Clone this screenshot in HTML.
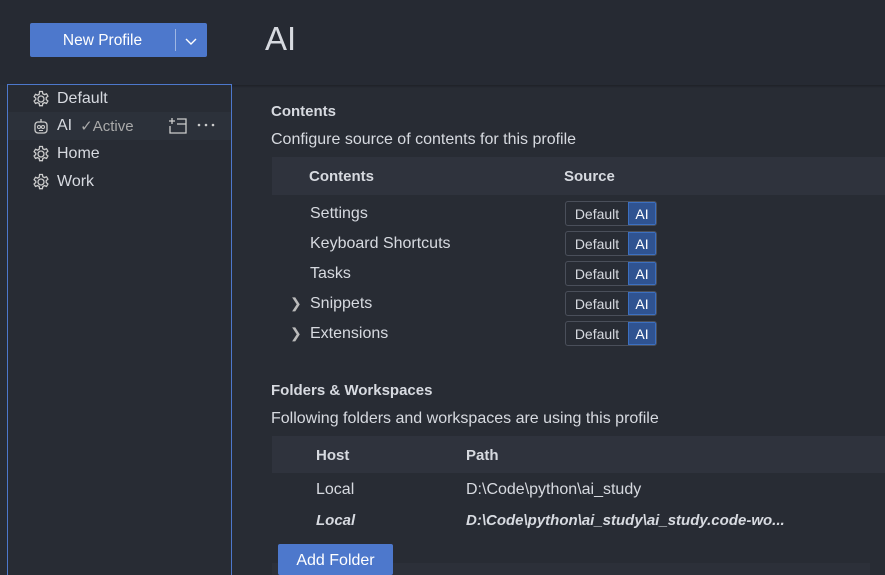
<!DOCTYPE html>
<html><head><meta charset="utf-8"><style>
*{margin:0;padding:0;box-sizing:border-box}
html,body{width:885px;height:575px;overflow:hidden}
body{background:#282c34;font-family:"Segoe UI","Liberation Sans",sans-serif;color:#d7dae0;font-size:16px;position:relative}
.a{position:absolute}
.btn{background:#4d78cc;color:#fff;border-radius:2px}
.row{position:absolute;left:0;height:28px;display:flex;align-items:center;font-size:16px}
.gear{width:18px;height:18px;margin-right:7px}
.seg{position:absolute;left:565px;width:92px;height:25px;border:1px solid #4a4f5a;border-radius:3px;display:flex;font-size:14px;overflow:hidden}
.seg span{display:flex;align-items:center;justify-content:center}
.seg .d{width:62px;color:#d7dae0}
.seg .s{flex:1;background:#2f5391;color:#fff;border:1px solid #3b6fc0}
.lbl{position:absolute;left:310px;font-size:16px;color:#d7dae0}
.chev{position:absolute;left:290px;font-size:14px;color:#bbb}
</style></head><body>
<div class="a" style="left:0;top:0;width:885px;height:85px;background:#262a33"></div>
<div class="a" style="left:232px;top:85px;width:653px;height:3px;background:linear-gradient(#1e2127,#282c34)"></div>
<div class="a btn" style="left:30px;top:23px;width:177px;height:34px;"></div>
<div class="a" style="left:30px;top:32px;width:145px;text-align:center;color:#fff;font-size:15.5px">New Profile</div>
<div class="a" style="left:175px;top:29px;width:1px;height:22px;background:#9fb6e3"></div>
<svg class="a" style="left:183px;top:33px" width="16" height="16" viewBox="0 0 16 16"><path d="M3 6l5 5 5-5" stroke="#fff" stroke-width="1.4" fill="none"/></svg>
<div class="a" style="left:265px;top:20px;font-size:33px;color:#d7dae0">AI</div>
<div class="a" style="left:7px;top:84px;width:225px;height:495px;border:1px solid #4d78cc"></div>
<div class="a" style="left:8px;top:112px;width:223px;height:28px;background:#2c313a"></div>
<svg width="0" height="0" style="position:absolute"><defs><g id="g"><circle cx="9" cy="9" r="3" fill="none" stroke="#ccc" stroke-width="1.3"/><path d="M7.6 1.5h2.8l.4 2.2 1.6.9 2.1-.8 1.4 2.4-1.7 1.5v1.8l1.7 1.5-1.4 2.4-2.1-.8-1.6.9-.4 2.2H7.6l-.4-2.2-1.6-.9-2.1.8-1.4-2.4 1.7-1.5V8.2L2.1 6.7l1.4-2.4 2.1.8 1.6-.9z" fill="none" stroke="#ccc" stroke-width="1.3"/></g></defs></svg>
<div class="row" style="top:85px;left:32px"><svg class="gear"><use href="#g"/></svg>Default</div>
<div class="row" style="top:112px;left:32px"><svg class="gear" viewBox="0 0 18 18"><rect x="3" y="5" width="12" height="11" rx="3" fill="none" stroke="#ccc" stroke-width="1.3"/><circle cx="7" cy="10" r="1.5" fill="none" stroke="#ccc"/><circle cx="11" cy="10" r="1.5" fill="none" stroke="#ccc"/><path d="M9 5V2" stroke="#ccc" stroke-width="1.3"/><path d="M7 13.5h4" stroke="#ccc"/></svg>AI<span style="margin-left:8px;color:#aaa;font-size:15px">✓Active</span></div>
<svg class="a" style="left:168px;top:117px" width="20" height="18" viewBox="0 0 20 18"><path d="M4 1v6M1 4h6M9 2h9v14H2V9M9 7h9" stroke="#ccc" stroke-width="1.3" fill="none"/></svg>
<svg class="a" style="left:197px;top:123px" width="18" height="4"><circle cx="2" cy="2" r="1.3" fill="#ccc"/><circle cx="9" cy="2" r="1.3" fill="#ccc"/><circle cx="16" cy="2" r="1.3" fill="#ccc"/></svg>
<div class="row" style="top:140px;left:32px"><svg class="gear"><use href="#g"/></svg>Home</div>
<div class="row" style="top:168px;left:32px"><svg class="gear"><use href="#g"/></svg>Work</div>

<div class="a" style="left:271px;top:103px;font-weight:bold;font-size:15px">Contents</div>
<div class="a" style="left:271px;top:131px">Configure source of contents for this profile</div>
<div class="a" style="left:272px;top:157px;width:613px;height:38px;background:#2f333d"></div>
<div class="a" style="left:309px;top:168px;font-weight:bold;font-size:15px">Contents</div>
<div class="a" style="left:564px;top:168px;font-weight:bold;font-size:15px">Source</div>
<div class="lbl" style="top:205px">Settings</div>
<div class="lbl" style="top:235px">Keyboard Shortcuts</div>
<div class="lbl" style="top:265px">Tasks</div>
<div class="chev" style="top:295px">&#x276F;</div><div class="lbl" style="top:295px">Snippets</div>
<div class="chev" style="top:325px">&#x276F;</div><div class="lbl" style="top:325px">Extensions</div>
<div class="seg" style="top:201px"><span class="d">Default</span><span class="s">AI</span></div>
<div class="seg" style="top:231px"><span class="d">Default</span><span class="s">AI</span></div>
<div class="seg" style="top:261px"><span class="d">Default</span><span class="s">AI</span></div>
<div class="seg" style="top:291px"><span class="d">Default</span><span class="s">AI</span></div>
<div class="seg" style="top:321px"><span class="d">Default</span><span class="s">AI</span></div>

<div class="a" style="left:271px;top:382px;font-weight:bold;font-size:15px">Folders &amp; Workspaces</div>
<div class="a" style="left:271px;top:410px">Following folders and workspaces are using this profile</div>
<div class="a" style="left:272px;top:436px;width:613px;height:37px;background:#2f333d"></div>
<div class="a" style="left:316px;top:447px;font-weight:bold;font-size:15px">Host</div>
<div class="a" style="left:466px;top:447px;font-weight:bold;font-size:15px">Path</div>
<div class="a" style="left:316px;top:481px">Local</div>
<div class="a" style="left:466px;top:481px">D:\Code\python\ai_study</div>
<div class="a" style="left:316px;top:512px;font-weight:bold;font-style:italic;font-size:15px">Local</div>
<div class="a" style="left:466px;top:512px;font-weight:bold;font-style:italic;font-size:15px">D:\Code\python\ai_study\ai_study.code-wo...</div>
<div class="a" style="left:272px;top:563px;width:598px;height:12px;background:#2c3039"></div>
<div class="a btn" style="left:278px;top:544px;width:115px;height:31px;text-align:center;line-height:33px;font-size:16px">Add Folder</div>
</body></html>
